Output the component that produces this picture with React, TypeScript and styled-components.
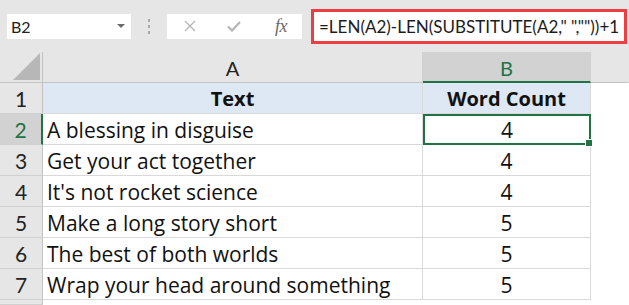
import React from "react";
import styled, { createGlobalStyle } from "styled-components";

const GlobalStyle = createGlobalStyle`
  html, body {
    margin: 0;
    padding: 0;
    background: #ffffff;
  }
  * {
    box-sizing: border-box;
  }
`;

const GREEN = "#217346";
const GRID = "#d9d9d9";
const HEADER_BG = "#e6e6e6";
const SELECTED_HEADER_BG = "#d2d2d2";
const BLUE = "#dde8f4";
const UI_FONT = `Lato, "Liberation Sans", sans-serif`;
const CELL_FONT = `"Open Sans", Lato, sans-serif`;

const Page = styled.div`
  width: 629px;
  height: 305px;
  overflow: hidden;
  background: #ffffff;
  font-family: ${UI_FONT};
`;

const Toolbar = styled.div`
  height: 52px;
  background: ${HEADER_BG};
  display: flex;
  align-items: center;
  padding: 0 2px 0 7px;
`;

const NameBox = styled.div`
  width: 124px;
  height: 25px;
  background: #fff;
  display: flex;
  align-items: center;
  justify-content: space-between;
  padding: 0 6px 0 4px;
  font-size: 16px;
  color: #222;
`;

const DropArrow = styled.span`
  width: 0;
  height: 0;
  border-left: 4px solid transparent;
  border-right: 4px solid transparent;
  border-top: 4px solid #6b6b6b;
`;

const Dots = styled.div`
  display: flex;
  flex-direction: column;
  gap: 3px;
  margin: 0 17px 0 17px;
  span {
    width: 2px;
    height: 3px;
    background: #a8a8a8;
  }
`;

const FxBox = styled.div`
  width: 135px;
  height: 25px;
  background: #fff;
  display: flex;
  align-items: center;
  padding: 0 0 0 16px;
`;

const FxIcon = styled.span<{ $width: number }>`
  width: ${(p) => p.$width}px;
  display: flex;
  justify-content: center;
  align-items: center;
`;

const FxLabel = styled.span`
  font-family: "Liberation Serif", "DejaVu Serif", serif;
  font-style: italic;
  font-size: 18px;
  color: #6a6a6a;
  letter-spacing: -0.5px;
`;

const FormulaInput = styled.div`
  flex: 1;
  height: 35px;
  margin-left: 9px;
  border: 3px solid #ee3d43;
  background: #fff;
  display: flex;
  align-items: center;
  padding-left: 5px;
  font-size: 17px;
  color: #1c1c1c;
  white-space: pre;
`;

const Sheet = styled.div`
  display: grid;
  grid-template-columns: 43px 380px 168px 1fr;
  grid-template-rows: 31px repeat(7, 31px) 1fr;
  height: 253px;
`;

const Corner = styled.div`
  background: ${HEADER_BG};
  border-right: 1px solid #c4c4c4;
  border-bottom: 1px solid #c4c4c4;
  position: relative;
  &::after {
    content: "";
    position: absolute;
    right: 2px;
    bottom: 2px;
    width: 0;
    height: 0;
    border-left: 27px solid transparent;
    border-bottom: 27px solid #b7b7b7;
  }
`;

const ColHeader = styled.div<{ $selected?: boolean; $blank?: boolean }>`
  background: ${(p) => (p.$selected ? SELECTED_HEADER_BG : HEADER_BG)};
  color: ${(p) => (p.$selected ? GREEN : "#222")};
  border-right: 1px solid ${(p) => (p.$blank ? "transparent" : "#d0d0d0")};
  border-bottom: ${(p) => (p.$selected ? `2px solid ${GREEN}` : "1px solid #c4c4c4")};
  display: flex;
  align-items: center;
  justify-content: center;
  font-size: 20px;
  padding-top: 2px;
`;

const RowHeader = styled.div<{ $selected?: boolean }>`
  background: ${(p) => (p.$selected ? SELECTED_HEADER_BG : HEADER_BG)};
  color: ${(p) => (p.$selected ? GREEN : "#222")};
  border-right: ${(p) => (p.$selected ? `2px solid ${GREEN}` : "1px solid #c4c4c4")};
  border-bottom: 1px solid #d0d0d0;
  display: flex;
  align-items: center;
  justify-content: center;
  font-size: 21px;
`;

const Cell = styled.div<{ $align?: "left" | "center"; $bold?: boolean; $fill?: string; $blank?: boolean }>`
  background: ${(p) => p.$fill || "#fff"};
  border-right: 1px solid ${(p) => (p.$blank ? "transparent" : GRID)};
  border-bottom: 1px solid ${(p) => (p.$blank ? "transparent" : GRID)};
  display: flex;
  align-items: center;
  justify-content: ${(p) => (p.$align === "center" ? "center" : "flex-start")};
  padding: 1px 4px 0 4px;
  font-family: ${CELL_FONT};
  font-size: ${(p) => (p.$bold ? 20 : 21)}px;
  font-weight: ${(p) => (p.$bold ? 700 : 400)};
  color: #111;
  white-space: nowrap;
`;

const ActiveCell = styled(Cell)`
  position: relative;
  border: 2px solid ${GREEN};
  &::after {
    content: "";
    position: absolute;
    right: -4px;
    bottom: -4px;
    width: 6px;
    height: 6px;
    background: ${GREEN};
    border: 1px solid #fff;
  }
`;

const rows = [
  { text: "A blessing in disguise", count: 4 },
  { text: "Get your act together", count: 4 },
  { text: "It's not rocket science", count: 4 },
  { text: "Make a long story short", count: 5 },
  { text: "The best of both worlds", count: 5 },
  { text: "Wrap your head around something", count: 5 },
];

export default function App() {
  return (
    <Page>
      <GlobalStyle />
      <Toolbar>
        <NameBox>
          <span>B2</span>
          <DropArrow />
        </NameBox>
        <Dots>
          <span />
          <span />
          <span />
        </Dots>
        <FxBox>
          <FxIcon $width={14}>
            <svg width="12" height="12" viewBox="0 0 12 12">
              <path d="M1 1 L11 11 M11 1 L1 11" stroke="#b5b5b5" strokeWidth="1.3" fill="none" />
            </svg>
          </FxIcon>
          <FxIcon $width={74}>
            <svg width="14" height="11" viewBox="0 0 14 11">
              <path d="M1 5.5 L5 9.5 L13 1" stroke="#b5b5b5" strokeWidth="2.2" fill="none" />
            </svg>
          </FxIcon>
          <FxIcon $width={20}>
            <FxLabel>fx</FxLabel>
          </FxIcon>
        </FxBox>
        <FormulaInput>{`=LEN(A2)-LEN(SUBSTITUTE(A2," ",""))+1`}</FormulaInput>
      </Toolbar>
      <Sheet>
        <Corner />
        <ColHeader>A</ColHeader>
        <ColHeader $selected>B</ColHeader>
        <ColHeader $blank />

        <RowHeader>1</RowHeader>
        <Cell $align="center" $bold $fill={BLUE}>Text</Cell>
        <Cell $align="center" $bold $fill={BLUE}>Word Count</Cell>
        <Cell $blank />

        {rows.map((r, i) => {
          const selected = i === 0;
          const ValueCell = selected ? ActiveCell : Cell;
          return (
            <React.Fragment key={r.text}>
              <RowHeader $selected={selected}>{i + 2}</RowHeader>
              <Cell>{r.text}</Cell>
              <ValueCell $align="center">{r.count}</ValueCell>
              <Cell $blank />
            </React.Fragment>
          );
        })}

        <RowHeader />
        <Cell $blank />
        <Cell $blank />
        <Cell $blank />
      </Sheet>
    </Page>
  );
}
